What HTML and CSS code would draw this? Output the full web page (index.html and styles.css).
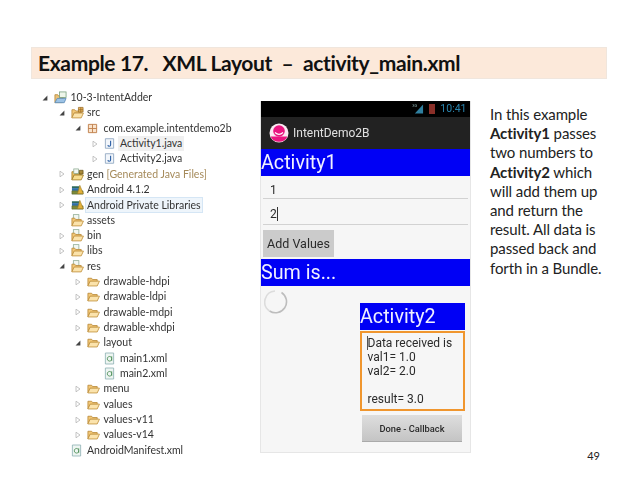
FILE: index.html
```html
<!DOCTYPE html>
<html lang="en">
<head>
<meta charset="utf-8">
<title>Example 17</title>
<link rel="stylesheet" href="styles.css">
</head>
<body>
<svg class="defs" width="0" height="0" aria-hidden="true">
  <symbol id="open" viewBox="0 0 10 10"><path d="M8 2 8 8 2 8Z" fill="#444"/></symbol>
  <symbol id="closed" viewBox="0 0 10 10"><path d="M2.5 1.5 7.5 5 2.5 8.5Z" fill="#fff" stroke="#b5b5b5"/></symbol>
  <symbol id="folder" viewBox="0 0 14 12"><path d="M1 2.5h4l1 1.4h5v2H3.5L1 10.5Z" fill="#f3c877" stroke="#b98a3a" stroke-width=".9"/><path d="M1 10.8 3.4 5.6H13.4L11 10.8Z" fill="#fbe3ac" stroke="#c1913f" stroke-width=".9"/></symbol>
  <symbol id="afolder" viewBox="0 0 14 14"><rect x="2.500" y=".7" width="6" height="7" fill="#f2f7f2" stroke="#8aa88e" stroke-width=".8"/><path d="M1 4.500h3l1 1.400h6v2H3.500L1 12.500Z" fill="#f3c877" stroke="#b98a3a" stroke-width=".9"/><path d="M1 12.800 3.400 7.600H13.400L11 12.800Z" fill="#fbe3ac" stroke="#c1913f" stroke-width=".9"/></symbol>
  <symbol id="project" viewBox="0 0 14 14"><path d="M1 4h3l1 1.400h5L9 12.500H1Z" fill="#e9c27a" stroke="#b98a3a" stroke-width=".9"/><rect x="6" y="1" width="7" height="6" fill="#eef6ea" stroke="#6f9a76" stroke-width=".8"/><path d="M1 12.600 3.400 8H13L11 12.600Z" fill="#9cc3e6" stroke="#5d8cb8" stroke-width=".9"/></symbol>
  <symbol id="srcf" viewBox="0 0 14 14"><path d="M1 4h3l1 1.400h6v2H3.500L1 12.500Z" fill="#f3c877" stroke="#b98a3a" stroke-width=".9"/><path d="M1 12.800 3.400 7.600H13.400L11 12.800Z" fill="#fbe3ac" stroke="#c1913f" stroke-width=".9"/><path d="M8 1.500h5v5H8ZM10.500 1.500v5M8 4h5" fill="#e6b45f" stroke="#9a6b24" stroke-width=".8"/></symbol>
  <symbol id="pkg" viewBox="0 0 12 12"><path d="M1.500 1.500h9v9h-9ZM6 1.500v9M1.500 6h9" fill="#f9e3cc" stroke="#c07f4a" stroke-width="1"/></symbol>
  <symbol id="java" viewBox="0 0 12 12"><path d="M1.500 .8h9v10.400h-9Z" fill="#f2f6fb" stroke="#8aa3bf" stroke-width=".9"/><path d="M7.200 3v4.600Q7.200 9 5.800 9T4.200 7.800" fill="none" stroke="#2a5fa5" stroke-width="1.200"/></symbol>
  <symbol id="libr" viewBox="0 0 14 12"><path d="M1 2.500h8v2H1Z" fill="#2f6a5c"/><path d="M1 4.500h8v3H1Z" fill="#2f6fa8"/><path d="M1 7.500h12v3.500H1Z" fill="#7d8a3a" stroke="#55602a" stroke-width=".6"/><path d="M9.500 1.500 13.300 10.500H7Z" fill="#e2b13c" stroke="#9a7a20" stroke-width=".6"/></symbol>
  <symbol id="xml" viewBox="0 0 12 14"><path d="M1.500 1h9v12h-9Z" fill="#eef5f2" stroke="#8fb3b5" stroke-width=".9"/><path d="M8.400 4.600v5M8.400 7a2.400 2.500 0 1 0 0 .6" fill="none" stroke="#4e8f58" stroke-width="1"/></symbol>
  <symbol id="gen" viewBox="0 0 14 14"><path d="M1 4h3l1 1.400h6v2H3.500L1 12.500Z" fill="#f0c15f" stroke="#a47f2a" stroke-width=".9"/><path d="M1 12.800 3.400 7.600H13.400L11 12.800Z" fill="#f8dd8f" stroke="#a47f2a" stroke-width=".9"/><rect x="3" y="1" width="5" height="5" fill="#f2f7f2" stroke="#8aa88e" stroke-width=".8"/><path d="M9 2.500h4v4H9Z" fill="#a98a3a" stroke="#665218" stroke-width=".8"/></symbol>
</svg>

<main class="slide">
  <h1 class="title">Example 17.&nbsp;&nbsp; XML Layout &nbsp;–&nbsp; activity_main.xml</h1>
  <div class="content">
    <ul class="tree">
      <li class="row l0"><svg class="arrow"><use href="#open"/></svg><svg class="icon"><use href="#project"/></svg><span>10-3-IntentAdder</span></li>
      <li class="row l1"><svg class="arrow"><use href="#open"/></svg><svg class="icon"><use href="#srcf"/></svg><span>src</span></li>
      <li class="row l2"><svg class="arrow"><use href="#open"/></svg><svg class="icon small"><use href="#pkg"/></svg><span>com.example.intentdemo2b</span></li>
      <li class="row l3"><svg class="arrow"><use href="#closed"/></svg><svg class="icon small"><use href="#java"/></svg><span class="hover">Activity1.java</span></li>
      <li class="row l3"><svg class="arrow"><use href="#closed"/></svg><svg class="icon small"><use href="#java"/></svg><span>Activity2.java</span></li>
      <li class="row l1"><svg class="arrow"><use href="#closed"/></svg><svg class="icon"><use href="#gen"/></svg><span>gen <em class="decor">[Generated Java Files]</em></span></li>
      <li class="row l1"><svg class="arrow"><use href="#closed"/></svg><svg class="icon"><use href="#libr"/></svg><span>Android 4.1.2</span></li>
      <li class="row l1"><svg class="arrow"><use href="#closed"/></svg><svg class="icon"><use href="#libr"/></svg><span class="selected">Android Private Libraries</span></li>
      <li class="row l1"><span class="arrow"></span><svg class="icon"><use href="#afolder"/></svg><span>assets</span></li>
      <li class="row l1"><svg class="arrow"><use href="#closed"/></svg><svg class="icon"><use href="#afolder"/></svg><span>bin</span></li>
      <li class="row l1"><svg class="arrow"><use href="#closed"/></svg><svg class="icon"><use href="#afolder"/></svg><span>libs</span></li>
      <li class="row l1"><svg class="arrow"><use href="#open"/></svg><svg class="icon"><use href="#afolder"/></svg><span>res</span></li>
      <li class="row l2"><svg class="arrow"><use href="#closed"/></svg><svg class="icon"><use href="#folder"/></svg><span>drawable-hdpi</span></li>
      <li class="row l2"><svg class="arrow"><use href="#closed"/></svg><svg class="icon"><use href="#folder"/></svg><span>drawable-ldpi</span></li>
      <li class="row l2"><svg class="arrow"><use href="#closed"/></svg><svg class="icon"><use href="#folder"/></svg><span>drawable-mdpi</span></li>
      <li class="row l2"><svg class="arrow"><use href="#closed"/></svg><svg class="icon"><use href="#folder"/></svg><span>drawable-xhdpi</span></li>
      <li class="row l2"><svg class="arrow"><use href="#open"/></svg><svg class="icon"><use href="#folder"/></svg><span>layout</span></li>
      <li class="row l3"><span class="arrow"></span><svg class="icon small"><use href="#xml"/></svg><span>main1.xml</span></li>
      <li class="row l3"><span class="arrow"></span><svg class="icon small"><use href="#xml"/></svg><span>main2.xml</span></li>
      <li class="row l2"><svg class="arrow"><use href="#closed"/></svg><svg class="icon"><use href="#folder"/></svg><span>menu</span></li>
      <li class="row l2"><svg class="arrow"><use href="#closed"/></svg><svg class="icon"><use href="#folder"/></svg><span>values</span></li>
      <li class="row l2"><svg class="arrow"><use href="#closed"/></svg><svg class="icon"><use href="#folder"/></svg><span>values-v11</span></li>
      <li class="row l2"><svg class="arrow"><use href="#closed"/></svg><svg class="icon"><use href="#folder"/></svg><span>values-v14</span></li>
      <li class="row l1"><span class="arrow"></span><svg class="icon small"><use href="#xml"/></svg><span>AndroidManifest.xml</span></li>
    </ul>

    <section class="phone">
      <div class="status">
        <span class="net">3G</span>
        <svg class="signal" viewBox="0 0 12 10"><path d="M11 0V10H2Z" fill="#2f7f9f"/></svg>
        <span class="battery"></span>
        <span class="clock">10:41</span>
      </div>
      <div class="actionbar">
        <svg class="appicon" viewBox="0 0 20 20"><circle cx="10" cy="10" r="9.500" fill="#fbeaf2"/><path d="M1.500 13.500H18.500A9.500 9.500 0 0 1 1.500 13.500Z" fill="#ea1580"/><circle cx="10" cy="8" r="5.800" fill="#ea1580"/><path d="M6 9.500q4 3.800 8 0" fill="none" stroke="#fff" stroke-width="1.200"/></svg>
        <span>IntentDemo2B</span>
      </div>
      <div class="band">Activity1</div>
      <div class="field">1</div>
      <div class="field">2<i class="caret"></i></div>
      <div class="addbtn">Add Values</div>
      <div class="band sum">Sum is...</div>
      <svg class="spinner" viewBox="0 0 24 24"><path d="M17.500 2.500A11 11 0 0 1 5.500 21" fill="none" stroke="#bdbdbd" stroke-width="1.600"/><path d="M5.500 21A11 11 0 0 1 11 1" fill="none" stroke="#dcdcdc" stroke-width="1.600"/></svg>
      <aside class="dialog">
        <div class="band">Activity2</div>
        <div class="output"><i class="caret2"></i>Data received is<br>val1= 1.0<br>val2= 2.0<br><br>result= 3.0</div>
        <div class="donebtn">Done - Callback</div>
      </aside>
    </section>

    <aside class="notes">
      <p>In this example <b>Activity1</b> passes two numbers to <b>Activity2</b> which will add them up and return the result. All data is passed back and forth in a Bundle.</p>
      <div class="pageno">49</div>
    </aside>
  </div>
</main>
</body>
</html>
```
FILE: styles.css
```css
* { box-sizing: border-box; }
html, body { margin: 0; background: #fff; }
.defs { display: block; height: 0; }
.slide {
  width: 638px;
  height: 478px;
  padding: 47px 31px 0;
  overflow: hidden;
}
.title {
  margin: 0;
  height: 32px;
  padding-left: 6px;
  background: #fce9da;
  border: 1px solid #f0e6dd;
  font: 700 21px/30px Lato, sans-serif;
  letter-spacing: -.35px;
  color: #111;
  white-space: pre;
}
.content { display: flex; align-items: stretch; margin-top: 11px; }

/* tree */
.tree {
  flex: 0 0 229px;
  margin: 0;
  padding: 0;
  list-style: none;
  font: 10.5px/15px Lato, sans-serif;
  color: #333;
  filter: blur(.35px);
}
.row { display: flex; align-items: center; height: 15.33px; white-space: nowrap; }
.l0 { padding-left: 10px; }
.l1 { padding-left: 26.5px; }
.l2 { padding-left: 43px; }
.l3 { padding-left: 59.5px; }
.arrow { flex: none; width: 8px; height: 8px; margin-right: 5px; }
.icon { flex: none; width: 13px; height: 13px; margin-right: 3.5px; }
.small { width: 11px; height: 13px; margin-right: 5.5px; }
.decor { font-style: normal; color: #a58a5a; }
.hover { background: #f0f0f0; margin-left: -2px; padding: 0 2px; }
.selected { background: #eef5fb; box-shadow: 0 0 0 1px #d5e6f5; padding: 0 1px; margin-left: -1px; height: 14px; line-height: 14px; }

/* phone */
.phone {
  position: relative;
  flex: 0 0 211px;
  align-self: flex-start;
  height: 352px;
  margin-top: 10.5px;
  background: #f6f6f6;
  border: 1px solid #e6e6e6;
  border-top: 0;
  font-family: Roboto, sans-serif;
  color: #2a2a2a;
  filter: blur(.3px);
}
.status {
  display: flex;
  align-items: center;
  justify-content: flex-end;
  height: 16.5px;
  padding-right: 3.5px;
  background: #000;
}
.net { align-self: flex-start; margin: 2px -4px 0 0; font-size: 4px; line-height: 5px; color: #8aa; }
.signal { width: 11px; height: 10px; margin-right: 5px; }
.battery { width: 6px; height: 10px; margin-right: 5px; background: #8a2f28; }
.clock { font-size: 10.5px; color: #2a86b0; }
.actionbar {
  display: flex;
  align-items: center;
  height: 31.5px;
  padding-left: 8px;
  background: #222;
  color: #e0e0e0;
  font-size: 12px;
}
.appicon { width: 20px; height: 20px; margin-right: 4px; }
.band {
  height: 27px;
  background: #0000f5;
  color: #f0f0ff;
  font-size: 19.7px;
  line-height: 28px;
  white-space: nowrap;
}
.field {
  height: 23.5px;
  margin: 0 2px;
  padding: 6px 0 0 7px;
  border-bottom: 1px solid #d2d2d2;
  font-size: 12px;
  line-height: 16px;
}
.field + .field { height: 26px; padding-top: 7px; }
.caret { display: inline-block; width: 1px; height: 14px; vertical-align: -3px; background: #333; }
.addbtn {
  width: 71px;
  height: 27px;
  margin: 5px 0 2px 2px;
  background: #cbcbcb;
  font-size: 12.5px;
  line-height: 27px;
  text-align: center;
}
.sum { height: 26.5px; }
.spinner { display: block; width: 24px; height: 24px; margin: 4px 0 0 3px; }

.dialog {
  position: absolute;
  left: 99px;
  top: 202px;
  width: 105px;
}
.output {
  position: relative;
  height: 80px;
  margin-top: 1px;
  padding: 3px 0 0 5.5px;
  border: 2px solid #f0962e;
  font-size: 12px;
  line-height: 14px;
  white-space: nowrap;
}
.caret2 { position: absolute; left: 4.5px; top: 3px; width: 1px; height: 14px; background: #555; }
.donebtn {
  width: 100px;
  height: 27.5px;
  margin: 4px 0 0 2px;
  background: linear-gradient(#dedede, #c4c4c4);
  border-bottom: 1px solid #aaa;
  font-size: 9.3px;
  font-weight: 500;
  line-height: 27px;
  text-align: center;
}

/* notes */
.notes {
  flex: 1;
  display: flex;
  flex-direction: column;
  justify-content: space-between;
  margin-bottom: -5px;
  padding: 15px 0 0 19px;
  font: 15px/19.2px Lato, sans-serif;
  letter-spacing: -.1px;
  color: #222;
}
.notes p { margin: 0; }
.pageno { align-self: flex-end; margin-right: 7px; font-size: 11px; line-height: 14px; letter-spacing: 0; }
```
